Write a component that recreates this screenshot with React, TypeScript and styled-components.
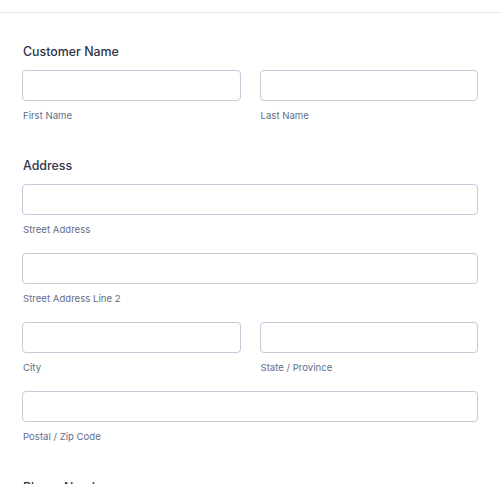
import React from "react";
import styled, { createGlobalStyle } from "styled-components";

const Global = createGlobalStyle`
  html, body { margin: 0; padding: 0; background: #ffffff; }
  body { font-family: Inter, "Noto Sans", sans-serif; -webkit-font-smoothing: antialiased; }
  * { box-sizing: border-box; }
`;

const TopBar = styled.div`
  height: 13px;
  border-bottom: 1px solid #e4e6ec;
`;

const Form = styled.div`
  padding: 30px 22px 0 22px;
  display: flex;
  flex-direction: column;
  gap: 35px;
`;

const Section = styled.section<{ $spaced?: boolean }>`
  display: flex;
  flex-direction: column;
  gap: 10px;
  margin-top: ${(p) => (p.$spaced ? "1px" : "0")};
`;

const Heading = styled.h2`
  margin: 0;
  font-size: 12.4px;
  line-height: 17px;
  font-weight: 500;
  color: #2f3549;
  padding-left: 1px;
`;

const Rows = styled.div`
  display: flex;
  flex-direction: column;
  gap: 17px;
`;

const Row = styled.div<{ $cols: number }>`
  display: grid;
  grid-template-columns: repeat(${(p) => p.$cols}, 1fr);
  column-gap: 19px;
`;

const Field = styled.div`
  display: flex;
  flex-direction: column;
  gap: 9px;
`;

const Input = styled.input`
  height: 31px;
  width: 100%;
  border: 1px solid #c5c9da;
  border-radius: 4px;
  background: #fff;
  padding: 0 10px;
  font: inherit;
  outline: none;
`;

const Sub = styled.label`
  font-size: 9.6px;
  line-height: 12px;
  color: #626d86;
  padding-left: 1px;
`;

const fieldsAddress: string[][] = [
  ["Street Address"],
  ["Street Address Line 2"],
  ["City", "State / Province"],
  ["Postal / Zip Code"],
];

export default function App() {
  return (
    <>
      <Global />
      <TopBar />
      <Form>
        <Section>
          <Heading>Customer Name</Heading>
          <Row $cols={2}>
            <Field>
              <Input />
              <Sub>First Name</Sub>
            </Field>
            <Field>
              <Input />
              <Sub>Last Name</Sub>
            </Field>
          </Row>
        </Section>
        <Section>
          <Heading>Address</Heading>
          <Rows>
            {fieldsAddress.map((row, i) => (
              <Row key={i} $cols={row.length}>
                {row.map((s) => (
                  <Field key={s}>
                    <Input />
                    <Sub>{s}</Sub>
                  </Field>
                ))}
              </Row>
            ))}
          </Rows>
        </Section>
        <Section $spaced>
          <Heading>Phone Number</Heading>
          <Row $cols={1}>
            <Field>
              <Input />
              <Sub>Please enter a valid phone number.</Sub>
            </Field>
          </Row>
        </Section>
      </Form>
    </>
  );
}
